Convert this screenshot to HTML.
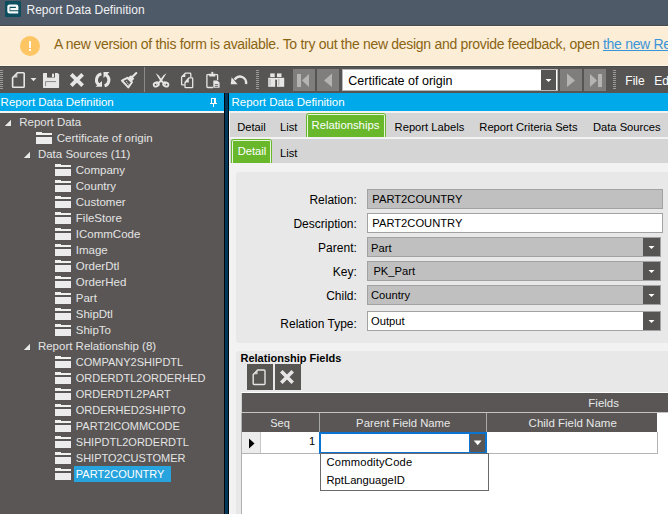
<!DOCTYPE html>
<html><head><meta charset="utf-8">
<style>
*{margin:0;padding:0;box-sizing:border-box}
html,body{width:668px;height:514px;overflow:hidden;background:#595655;font-family:"Liberation Sans",sans-serif;position:relative}
.a{position:absolute}
.t{position:absolute;white-space:nowrap;line-height:1}
</style></head><body>
<div class="a" style="left:0px;top:0px;width:668px;height:25px;background:#4f5a68;"></div>
<div class="a" style="left:0px;top:25px;width:668px;height:1px;background:#48494c;"></div>
<div class="a" style="left:5px;top:1px;width:16px;height:16px;background:#0d4e5e;border-radius:1px"></div>
<svg class="a" style="left:5px;top:1px" width="16" height="16" viewBox="0 0 16 16"><path d="M2.3 5.6 Q2.3 3.4 4.5 3.4 H11.2 Q13.4 3.4 13.4 5.6 V9.2 H5.3 V7 H10.9 V5.7 H4.6 V10.2 H13.2 V12.5 H4.5 Q2.3 12.5 2.3 10.3 Z" fill="#f6f9fa"/></svg>
<div class="t" style="left:26.5px;top:3.84px;font-size:12px;color:#f0f1f3;">Report Data Definition</div>
<div class="a" style="left:0px;top:26px;width:668px;height:40px;background:#fcedd6;"></div>
<div class="a" style="left:0px;top:26px;width:668px;height:1px;background:#fff7e2;"></div>
<div class="a" style="left:0px;top:65px;width:668px;height:1px;background:#fff7e2;"></div>
<div class="a" style="left:0px;top:66px;width:668px;height:1px;background:#49484a;"></div>
<div class="a" style="left:20px;top:36px;width:20px;height:20px;background:#fdc564;border-radius:50%"></div>
<div class="a" style="left:29.2px;top:41px;width:1.7px;height:6.5px;background:#fffaf0;"></div>
<div class="a" style="left:29.2px;top:49.2px;width:1.7px;height:1.7px;background:#fffaf0;"></div>
<div class="t" style="left:54px;top:37.15px;font-size:14px;color:#8a6412;letter-spacing:-0.3px;">A new version of this form is available. To try out the new design and provide feedback, open <span style="color:#3a95d8;text-decoration:underline">the new Report Data Definition</span></div>
<div class="a" style="left:0px;top:67px;width:668px;height:26px;background:#575554;"></div>
<svg class="a" style="left:0;top:66px" width="668" height="27" viewBox="0 66 668 27">
<g fill="#9c9a98"><rect x="0" y="70" width="3" height="1"/><rect x="0" y="72" width="3" height="1"/><rect x="0" y="74" width="3" height="1"/><rect x="0" y="76" width="3" height="1"/><rect x="0" y="78" width="3" height="1"/><rect x="0" y="80" width="3" height="1"/><rect x="0" y="82" width="3" height="1"/><rect x="0" y="84" width="3" height="1"/><rect x="0" y="86" width="3" height="1"/><rect x="0" y="88" width="3" height="1"/></g>
<path d="M12.6 77.8 L17.4 72.8 H23.4 Q24.2 72.8 24.2 73.6 V86.4 Q24.2 87.2 23.4 87.2 H13.4 Q12.6 87.2 12.6 86.4 Z" fill="none" stroke="#e6e6e6" stroke-width="1.6" stroke-linejoin="round"/><path d="M13 77.6 H17.4 V73.2 Z" fill="#e6e6e6" opacity="0.8"/>
<path d="M30.5 78 H36.5 L33.5 81.2 Z" fill="#e6e6e6"/>
<path d="M43.6 72.9 H57.6 L59.1 74.4 V87.3 Q59.1 87.9 58.5 87.9 H43.6 Q43 87.9 43 87.3 V73.5 Q43 72.9 43.6 72.9 Z" fill="#e6e6e6"/>
<rect x="47" y="72.9" width="8" height="4.7" fill="#575554"/>
<rect x="52" y="73.7" width="2" height="3.5" fill="#e6e6e6"/>
<path d="M45.6 86.2 V81.6 H56" fill="none" stroke="#8a8988" stroke-width="1"/>
<path d="M71.2 74.3 L82.6 85.7 M82.6 74.3 L71.2 85.7" stroke="#e6e6e6" stroke-width="3.8"/>
<path d="M101.4 73.9 A6.2 6.2 0 0 0 99.2 85.1" fill="none" stroke="#e6e6e6" stroke-width="3"/>
<path d="M95.5 86.8 L102 86.8 L102 81 Z" fill="#e6e6e6"/>
<path d="M104.6 85.9 A6.2 6.2 0 0 0 105.9 74.7" fill="none" stroke="#e6e6e6" stroke-width="3"/>
<path d="M103.5 72 L109.5 72 L103.5 78 Z" fill="#e6e6e6"/>
<path d="M136.3 73 L132 77.3" stroke="#e6e6e6" stroke-width="2" stroke-linecap="round"/>
<path d="M128 77.6 L131 75.2 L134.3 78.8 L131.6 81.4 Z" fill="#e6e6e6"/>
<path d="M121.9 80.6 L127.3 77.8 L132 82.2 L128.3 87.4 Z" fill="none" stroke="#e6e6e6" stroke-width="1.9" stroke-linejoin="round"/>
<path d="M123.5 82 L125 83.2 M125 84 L126.5 85.2 M126 81.3 L127.2 82.3 M127.4 83.3 L128.6 84.3" stroke="#e6e6e6" stroke-width="1"/>
<rect x="144" y="67" width="1" height="25" fill="#8c8a88"/>
<path d="M155.6 73.3 L158.6 75.2 L163.2 81.5 L166.5 83.5 L165.5 85 L161 82 Z" fill="#e6e6e6"/>
<path d="M166.5 73.3 L163.5 75.2 L158.9 81.5 L155.6 83.5 L156.6 85 L161.1 82 Z" fill="#e6e6e6"/>
<ellipse cx="156.3" cy="84.4" rx="2.7" ry="1.9" transform="rotate(-25 156.3 84.4)" fill="none" stroke="#e6e6e6" stroke-width="1.8"/>
<ellipse cx="165.8" cy="84.4" rx="2.7" ry="1.9" transform="rotate(25 165.8 84.4)" fill="none" stroke="#e6e6e6" stroke-width="1.8"/>
<path d="M181.6 77 L185.3 73.1 H190 Q190.8 73.1 190.8 73.9 V77.3 M181.6 77 V84.2 Q181.6 84.9 182.3 84.9 H184.5" fill="none" stroke="#e6e6e6" stroke-width="1.3" stroke-linejoin="round"/>
<path d="M181.8 77 H185.3 V73.3 Z" fill="#e6e6e6"/>
<path d="M185 82.5 L188.8 77.8 H192 Q192.7 77.8 192.7 78.5 V86.9 Q192.7 87.6 192 87.6 H185.7 Q185 87.6 185 86.9 Z" fill="none" stroke="#e6e6e6" stroke-width="1.3" stroke-linejoin="round"/>
<path d="M185.2 82.5 H188.8 V78 Z" fill="#e6e6e6"/>
<path d="M209 74.6 H207.6 Q206.9 74.6 206.9 75.3 V86.8 Q206.9 87.5 207.6 87.5 H213 M217.6 80 V75.3 Q217.6 74.6 216.9 74.6 H215.5" fill="none" stroke="#e6e6e6" stroke-width="1.3"/>
<path d="M208.8 73.8 H215.8 L215.2 76.6 H209.4 Z" fill="#e6e6e6"/>
<circle cx="212.3" cy="72.9" r="1.1" fill="#e6e6e6"/>
<path d="M213.3 80.6 H217.4 L219.6 82.8 V87.8 H213.3 Z" fill="#e6e6e6"/>
<path d="M214.8 84.6 H218.2 M214.8 86.4 H218.2" stroke="#575554" stroke-width="0.8"/>
<path d="M246 84 A6.2 6.2 0 0 0 234.6 79.6" fill="none" stroke="#e6e6e6" stroke-width="2.4"/>
<path d="M230.7 84.2 L231.6 77.3 L237.6 84.2 Z" fill="#e6e6e6"/>
<g fill="#9c9a98"><rect x="256" y="70" width="3" height="1"/><rect x="256" y="72" width="3" height="1"/><rect x="256" y="74" width="3" height="1"/><rect x="256" y="76" width="3" height="1"/><rect x="256" y="78" width="3" height="1"/><rect x="256" y="80" width="3" height="1"/><rect x="256" y="82" width="3" height="1"/><rect x="256" y="84" width="3" height="1"/><rect x="256" y="86" width="3" height="1"/><rect x="256" y="88" width="3" height="1"/></g>
<rect x="270.2" y="73.4" width="4.5" height="3.6" fill="#e6e6e6"/>
<rect x="277" y="73.4" width="4.5" height="3.6" fill="#e6e6e6"/>
<rect x="268.2" y="77.8" width="7" height="9" fill="#e6e6e6"/>
<rect x="277" y="77.8" width="7.2" height="9" fill="#e6e6e6"/>
<rect x="275.2" y="78" width="1.8" height="1.6" fill="#fff"/>
<path d="M270 79 V85.5 M278.8 79 V85.5" stroke="#a9a9a9" stroke-width="0.9"/>
<rect x="293" y="69" width="22" height="22" fill="#807e7c"/>
<rect x="317" y="69" width="22" height="22" fill="#807e7c"/>
<rect x="297" y="74" width="4" height="13" fill="#b6b4b2"/>
<path d="M309 74 V87 L302 80.5 Z" fill="#b6b4b2"/>
<path d="M332 73.5 V87 L324 80.5 Z" fill="#b6b4b2"/>
<rect x="560" y="69" width="22" height="22" fill="#807e7c"/>
<rect x="584" y="69" width="22" height="22" fill="#807e7c"/>
<path d="M567 73.5 V87 L575 80.5 Z" fill="#b6b4b2"/>
<path d="M590 74 V87 L597 80.5 Z" fill="#b6b4b2"/>
<rect x="598" y="74" width="4" height="13" fill="#b6b4b2"/>
<g fill="#9c9a98"><rect x="613" y="70" width="3" height="1"/><rect x="613" y="72" width="3" height="1"/><rect x="613" y="74" width="3" height="1"/><rect x="613" y="76" width="3" height="1"/><rect x="613" y="78" width="3" height="1"/><rect x="613" y="80" width="3" height="1"/><rect x="613" y="82" width="3" height="1"/><rect x="613" y="84" width="3" height="1"/><rect x="613" y="86" width="3" height="1"/><rect x="613" y="88" width="3" height="1"/></g>
</svg>
<div class="a" style="left:342px;top:69px;width:216px;height:22px;background:#fff;border:1px solid #b8b8b8"></div>
<div class="a" style="left:541px;top:70px;width:15px;height:20px;background:#575554;"></div>
<svg class="a" style="left:541px;top:70px" width="15" height="20"><path d="M4.5 9 H10.5 L7.5 12 Z" fill="#fff"/></svg>
<div class="t" style="left:348.3px;top:75.42px;font-size:12.5px;color:#000;">Certificate of origin</div>
<div class="t" style="left:625.3px;top:75.44px;font-size:12px;color:#fff;">File</div>
<div class="t" style="left:654.3px;top:75.44px;font-size:12px;color:#fff;">Edit</div>
<div class="a" style="left:0px;top:93px;width:224px;height:18px;background:#00aaea;"></div>
<div class="t" style="left:0.6px;top:97.27px;font-size:11.5px;color:#fff;">Report Data Definition</div>
<svg class="a" style="left:0;top:0" width="224" height="112"><g fill="#fff"><rect x="211" y="98" width="5" height="1"/><rect x="211" y="98" width="1" height="5"/><rect x="214" y="98" width="2" height="5"/><rect x="210" y="103" width="7" height="1"/><rect x="213" y="104" width="1" height="3"/></g></svg>
<div class="a" style="left:0px;top:111px;width:224px;height:2px;background:#f4f4f4;"></div>
<div class="a" style="left:0px;top:113px;width:224px;height:401px;background:#595655;"></div>
<div class="t" style="left:19.2px;top:117.27px;font-size:11.5px;color:#e4e4e4;">Report Data</div>
<div class="t" style="left:56.8px;top:133.27px;font-size:11.5px;color:#e4e4e4;">Certificate of origin</div>
<div class="t" style="left:37.9px;top:149.27px;font-size:11.5px;color:#e4e4e4;">Data Sources (11)</div>
<div class="t" style="left:75.8px;top:165.27px;font-size:11.5px;color:#e4e4e4;">Company</div>
<div class="t" style="left:75.8px;top:181.27px;font-size:11.5px;color:#e4e4e4;">Country</div>
<div class="t" style="left:75.8px;top:197.27px;font-size:11.5px;color:#e4e4e4;">Customer</div>
<div class="t" style="left:75.8px;top:213.27px;font-size:11.5px;color:#e4e4e4;">FileStore</div>
<div class="t" style="left:75.8px;top:229.27px;font-size:11.5px;color:#e4e4e4;">ICommCode</div>
<div class="t" style="left:75.8px;top:245.27px;font-size:11.5px;color:#e4e4e4;">Image</div>
<div class="t" style="left:75.8px;top:261.27px;font-size:11.5px;color:#e4e4e4;">OrderDtl</div>
<div class="t" style="left:75.8px;top:277.27px;font-size:11.5px;color:#e4e4e4;">OrderHed</div>
<div class="t" style="left:75.8px;top:293.27px;font-size:11.5px;color:#e4e4e4;">Part</div>
<div class="t" style="left:75.8px;top:309.27px;font-size:11.5px;color:#e4e4e4;">ShipDtl</div>
<div class="t" style="left:75.8px;top:325.27px;font-size:11.5px;color:#e4e4e4;">ShipTo</div>
<div class="t" style="left:37.9px;top:341.27px;font-size:11.5px;color:#e4e4e4;">Report Relationship (8)</div>
<div class="t" style="left:75.8px;top:356.69px;font-size:11px;color:#e4e4e4;">COMPANY2SHIPDTL</div>
<div class="t" style="left:75.8px;top:372.69px;font-size:11px;color:#e4e4e4;">ORDERDTL2ORDERHED</div>
<div class="t" style="left:75.8px;top:388.69px;font-size:11px;color:#e4e4e4;">ORDERDTL2PART</div>
<div class="t" style="left:75.8px;top:404.69px;font-size:11px;color:#e4e4e4;">ORDERHED2SHIPTO</div>
<div class="t" style="left:75.8px;top:420.69px;font-size:11px;color:#e4e4e4;">PART2ICOMMCODE</div>
<div class="t" style="left:75.8px;top:436.69px;font-size:11px;color:#e4e4e4;">SHIPDTL2ORDERDTL</div>
<div class="t" style="left:75.8px;top:452.69px;font-size:11px;color:#e4e4e4;">SHIPTO2CUSTOMER</div>
<div class="a" style="left:73.7px;top:466px;width:97px;height:16px;background:#27a3dd;"></div>
<div class="t" style="left:75.8px;top:468.69px;font-size:11px;color:#ffffff;">PART2COUNTRY</div>
<svg class="a" style="left:0;top:0" width="224" height="514"><rect x="10" y="120" width="1" height="1" fill="#e8e8e8"/><rect x="10" y="120" width="1" height="1" fill="#bdbdbd"/><rect x="9" y="121" width="2" height="1" fill="#e8e8e8"/><rect x="9" y="121" width="1" height="1" fill="#bdbdbd"/><rect x="8" y="122" width="3" height="1" fill="#e8e8e8"/><rect x="8" y="122" width="1" height="1" fill="#bdbdbd"/><rect x="7" y="123" width="4" height="1" fill="#e8e8e8"/><rect x="7" y="123" width="1" height="1" fill="#bdbdbd"/><rect x="6" y="124" width="5" height="1" fill="#e8e8e8"/><rect x="6" y="124" width="1" height="1" fill="#bdbdbd"/><rect x="5" y="125" width="6" height="1" fill="#e8e8e8"/><rect x="5" y="125" width="1" height="1" fill="#bdbdbd"/><rect x="36" y="132" width="6" height="1.5" fill="#f0f0f0"/><rect x="36" y="133" width="16" height="2" fill="#f0f0f0"/><rect x="36" y="137" width="16" height="7" fill="#ececec"/><rect x="29" y="152" width="1" height="1" fill="#e8e8e8"/><rect x="29" y="152" width="1" height="1" fill="#bdbdbd"/><rect x="28" y="153" width="2" height="1" fill="#e8e8e8"/><rect x="28" y="153" width="1" height="1" fill="#bdbdbd"/><rect x="27" y="154" width="3" height="1" fill="#e8e8e8"/><rect x="27" y="154" width="1" height="1" fill="#bdbdbd"/><rect x="26" y="155" width="4" height="1" fill="#e8e8e8"/><rect x="26" y="155" width="1" height="1" fill="#bdbdbd"/><rect x="25" y="156" width="5" height="1" fill="#e8e8e8"/><rect x="25" y="156" width="1" height="1" fill="#bdbdbd"/><rect x="24" y="157" width="6" height="1" fill="#e8e8e8"/><rect x="24" y="157" width="1" height="1" fill="#bdbdbd"/><rect x="55" y="164" width="6" height="1.5" fill="#f0f0f0"/><rect x="55" y="165" width="16" height="2" fill="#f0f0f0"/><rect x="55" y="169" width="16" height="7" fill="#ececec"/><rect x="55" y="180" width="6" height="1.5" fill="#f0f0f0"/><rect x="55" y="181" width="16" height="2" fill="#f0f0f0"/><rect x="55" y="185" width="16" height="7" fill="#ececec"/><rect x="55" y="196" width="6" height="1.5" fill="#f0f0f0"/><rect x="55" y="197" width="16" height="2" fill="#f0f0f0"/><rect x="55" y="201" width="16" height="7" fill="#ececec"/><rect x="55" y="212" width="6" height="1.5" fill="#f0f0f0"/><rect x="55" y="213" width="16" height="2" fill="#f0f0f0"/><rect x="55" y="217" width="16" height="7" fill="#ececec"/><rect x="55" y="228" width="6" height="1.5" fill="#f0f0f0"/><rect x="55" y="229" width="16" height="2" fill="#f0f0f0"/><rect x="55" y="233" width="16" height="7" fill="#ececec"/><rect x="55" y="244" width="6" height="1.5" fill="#f0f0f0"/><rect x="55" y="245" width="16" height="2" fill="#f0f0f0"/><rect x="55" y="249" width="16" height="7" fill="#ececec"/><rect x="55" y="260" width="6" height="1.5" fill="#f0f0f0"/><rect x="55" y="261" width="16" height="2" fill="#f0f0f0"/><rect x="55" y="265" width="16" height="7" fill="#ececec"/><rect x="55" y="276" width="6" height="1.5" fill="#f0f0f0"/><rect x="55" y="277" width="16" height="2" fill="#f0f0f0"/><rect x="55" y="281" width="16" height="7" fill="#ececec"/><rect x="55" y="292" width="6" height="1.5" fill="#f0f0f0"/><rect x="55" y="293" width="16" height="2" fill="#f0f0f0"/><rect x="55" y="297" width="16" height="7" fill="#ececec"/><rect x="55" y="308" width="6" height="1.5" fill="#f0f0f0"/><rect x="55" y="309" width="16" height="2" fill="#f0f0f0"/><rect x="55" y="313" width="16" height="7" fill="#ececec"/><rect x="55" y="324" width="6" height="1.5" fill="#f0f0f0"/><rect x="55" y="325" width="16" height="2" fill="#f0f0f0"/><rect x="55" y="329" width="16" height="7" fill="#ececec"/><rect x="29" y="344" width="1" height="1" fill="#e8e8e8"/><rect x="29" y="344" width="1" height="1" fill="#bdbdbd"/><rect x="28" y="345" width="2" height="1" fill="#e8e8e8"/><rect x="28" y="345" width="1" height="1" fill="#bdbdbd"/><rect x="27" y="346" width="3" height="1" fill="#e8e8e8"/><rect x="27" y="346" width="1" height="1" fill="#bdbdbd"/><rect x="26" y="347" width="4" height="1" fill="#e8e8e8"/><rect x="26" y="347" width="1" height="1" fill="#bdbdbd"/><rect x="25" y="348" width="5" height="1" fill="#e8e8e8"/><rect x="25" y="348" width="1" height="1" fill="#bdbdbd"/><rect x="24" y="349" width="6" height="1" fill="#e8e8e8"/><rect x="24" y="349" width="1" height="1" fill="#bdbdbd"/><rect x="55" y="356" width="6" height="1.5" fill="#f0f0f0"/><rect x="55" y="357" width="16" height="2" fill="#f0f0f0"/><rect x="55" y="361" width="16" height="7" fill="#ececec"/><rect x="55" y="372" width="6" height="1.5" fill="#f0f0f0"/><rect x="55" y="373" width="16" height="2" fill="#f0f0f0"/><rect x="55" y="377" width="16" height="7" fill="#ececec"/><rect x="55" y="388" width="6" height="1.5" fill="#f0f0f0"/><rect x="55" y="389" width="16" height="2" fill="#f0f0f0"/><rect x="55" y="393" width="16" height="7" fill="#ececec"/><rect x="55" y="404" width="6" height="1.5" fill="#f0f0f0"/><rect x="55" y="405" width="16" height="2" fill="#f0f0f0"/><rect x="55" y="409" width="16" height="7" fill="#ececec"/><rect x="55" y="420" width="6" height="1.5" fill="#f0f0f0"/><rect x="55" y="421" width="16" height="2" fill="#f0f0f0"/><rect x="55" y="425" width="16" height="7" fill="#ececec"/><rect x="55" y="436" width="6" height="1.5" fill="#f0f0f0"/><rect x="55" y="437" width="16" height="2" fill="#f0f0f0"/><rect x="55" y="441" width="16" height="7" fill="#ececec"/><rect x="55" y="452" width="6" height="1.5" fill="#f0f0f0"/><rect x="55" y="453" width="16" height="2" fill="#f0f0f0"/><rect x="55" y="457" width="16" height="7" fill="#ececec"/><rect x="55" y="468" width="6" height="1.5" fill="#f0f0f0"/><rect x="55" y="469" width="16" height="2" fill="#f0f0f0"/><rect x="55" y="473" width="16" height="7" fill="#ececec"/></svg>
<div class="a" style="left:224px;top:93px;width:5px;height:421px;background:#04385a;border-left:1px solid #02080e;border-right:1px solid #000810"></div>
<div class="a" style="left:229px;top:93px;width:439px;height:18px;background:#00aaea;"></div>
<div class="t" style="left:231.5px;top:97.27px;font-size:11.5px;color:#fff;">Report Data Definition</div>
<div class="a" style="left:229px;top:111px;width:439px;height:403px;background:#f2f2f2;"></div>
<div class="a" style="left:229px;top:113px;width:439px;height:24px;background:#d5d5d5;"></div>
<div class="a" style="left:229px;top:139px;width:439px;height:24px;background:#d5d5d5;"></div>
<div class="a" style="left:229px;top:111px;width:1px;height:403px;background:#f6f6f6;"></div>
<div class="a" style="left:306px;top:113px;width:80px;height:24px;background:#69b82b;border-radius:3px 3px 0 0"></div>
<div class="a" style="left:307px;top:114px;width:78px;height:23px;background:#69b82b;border:1px solid #e8f5dd;border-bottom:none;border-radius:2px 2px 0 0"></div>
<div class="t" style="left:311.5px;top:120.33px;font-size:11.3px;color:#ffffff;">Relationships</div>
<div class="t" style="left:237.2px;top:122.32px;font-size:11.2px;color:#000;">Detail</div>
<div class="t" style="left:280px;top:122.32px;font-size:11.2px;color:#000;">List</div>
<div class="t" style="left:394.6px;top:122.32px;font-size:11.2px;color:#000;">Report Labels</div>
<div class="t" style="left:479.3px;top:122.32px;font-size:11.2px;color:#000;">Report Criteria Sets</div>
<div class="t" style="left:592.9px;top:122.32px;font-size:11.2px;color:#000;">Data Sources</div>
<div class="a" style="left:231px;top:139px;width:41px;height:24px;background:#69b82b;border-radius:3px 3px 0 0"></div>
<div class="a" style="left:232px;top:140px;width:39px;height:23px;background:#69b82b;border:1px solid #e8f5dd;border-bottom:none;border-radius:2px 2px 0 0"></div>
<div class="t" style="left:237.7px;top:146.12px;font-size:11.2px;color:#ffffff;">Detail</div>
<div class="t" style="left:280px;top:148.22px;font-size:11.2px;color:#000;">List</div>
<div class="a" style="left:236px;top:172px;width:440px;height:171px;background:#e8e8e8;border-radius:3px"></div>
<div class="t" style="right:311.2px;top:194.14px;font-size:12px;color:#000;">Relation:</div>
<div class="t" style="right:311.2px;top:217.54px;font-size:12px;color:#000;">Description:</div>
<div class="t" style="right:311.2px;top:241.84px;font-size:12px;color:#000;">Parent:</div>
<div class="t" style="right:311.2px;top:266.44px;font-size:12px;color:#000;">Key:</div>
<div class="t" style="right:311.2px;top:290.44px;font-size:12px;color:#000;">Child:</div>
<div class="t" style="right:311.2px;top:318.34px;font-size:12px;color:#000;">Relation Type:</div>
<div class="a" style="left:367px;top:189px;width:296px;height:20px;background:#c0c0c0;border:1px solid #a2a2a2"></div>
<div class="t" style="left:372.3px;top:193.62px;font-size:11.2px;color:#000;">PART2COUNTRY</div>
<div class="a" style="left:367px;top:213px;width:296px;height:20px;background:#fff;border:1px solid #a2a2a2"></div>
<div class="t" style="left:372.3px;top:217.62px;font-size:11.2px;color:#000;">PART2COUNTRY</div>
<div class="a" style="left:367px;top:237px;width:294px;height:20px;background:#c0c0c0;border:1px solid #a2a2a2"></div>
<div class="a" style="left:643px;top:238px;width:17px;height:18px;background:#575554;"></div>
<svg class="a" style="left:643px;top:238px" width="17" height="18"><path d="M5.5 8 H11.5 L8.5 11 Z" fill="#fff"/></svg>
<div class="t" style="left:371px;top:242.52px;font-size:11.2px;color:#000;">Part</div>
<div class="a" style="left:367px;top:261px;width:294px;height:20px;background:#c0c0c0;border:1px solid #a2a2a2"></div>
<div class="a" style="left:643px;top:262px;width:17px;height:18px;background:#575554;"></div>
<svg class="a" style="left:643px;top:262px" width="17" height="18"><path d="M5.5 8 H11.5 L8.5 11 Z" fill="#fff"/></svg>
<div class="t" style="left:373.4px;top:265.92px;font-size:11.2px;color:#000;">PK_Part</div>
<div class="a" style="left:367px;top:285px;width:294px;height:20px;background:#c0c0c0;border:1px solid #a2a2a2"></div>
<div class="a" style="left:643px;top:286px;width:17px;height:18px;background:#575554;"></div>
<svg class="a" style="left:643px;top:286px" width="17" height="18"><path d="M5.5 8 H11.5 L8.5 11 Z" fill="#fff"/></svg>
<div class="t" style="left:371px;top:290.12px;font-size:11.2px;color:#000;">Country</div>
<div class="a" style="left:367px;top:311px;width:294px;height:20px;background:#fff;border:1px solid #a2a2a2"></div>
<div class="a" style="left:643px;top:312px;width:17px;height:18px;background:#575554;"></div>
<svg class="a" style="left:643px;top:312px" width="17" height="18"><path d="M5.5 8 H11.5 L8.5 11 Z" fill="#fff"/></svg>
<div class="t" style="left:371px;top:316.42px;font-size:11.2px;color:#000;">Output</div>
<div class="a" style="left:236px;top:351px;width:440px;height:170px;background:#e8e8e8;border-radius:3px"></div>
<div class="t" style="left:240.5px;top:353.29px;font-size:11px;color:#000;font-weight:bold;">Relationship Fields</div>
<div class="a" style="left:247px;top:364px;width:26px;height:26px;background:#585653;"></div>
<div class="a" style="left:275px;top:364px;width:26px;height:26px;background:#585653;"></div>
<svg class="a" style="left:247px;top:364px" width="54" height="26"><path d="M6.2 10.5 L10.6 6 H17 Q18 6 18 7 V19.5 Q18 20.5 17 20.5 H7.2 Q6.2 20.5 6.2 19.5 Z" fill="none" stroke="#e6e6e6" stroke-width="1.4" stroke-linejoin="round"/><path d="M6.6 10.3 H10.6 V6.3 Z" fill="#e6e6e6" opacity="0.8"/><path d="M34.3 7.3 L45.7 18.7 M45.7 7.3 L34.3 18.7" stroke="#e6e6e6" stroke-width="3.6"/></svg>
<div class="a" style="left:241px;top:392px;width:427px;height:122px;background:#fff;"></div>
<div class="a" style="left:242px;top:393px;width:426px;height:19px;background:#595655;"></div>
<div class="a" style="left:242px;top:412px;width:426px;height:1px;background:#c4c4c4;"></div>
<div class="t" style="left:588.3px;top:397.67px;font-size:11.5px;color:#e8e8e8;">Fields</div>
<div class="a" style="left:242px;top:413px;width:415px;height:19px;background:#595655;"></div>
<div class="a" style="left:319px;top:413px;width:1px;height:19px;background:#a8a8a8;"></div>
<div class="a" style="left:486px;top:413px;width:1px;height:19px;background:#a8a8a8;"></div>
<div class="t" style="left:80px;width:400px;text-align:center;top:417.69px;font-size:11px;color:#e8e8e8;">Seq</div>
<div class="t" style="left:203.2px;width:400px;text-align:center;top:418.43px;font-size:11.3px;color:#e8e8e8;">Parent Field Name</div>
<div class="t" style="left:372.70000000000005px;width:400px;text-align:center;top:418.27px;font-size:11.5px;color:#e8e8e8;">Child Field Name</div>
<div class="a" style="left:242px;top:432px;width:19px;height:21px;background:#ececec;border-right:1px solid #c8c8c8"></div>
<svg class="a" style="left:241px;top:432px" width="20" height="21"><path d="M8 6.5 V16.5 L13.5 11.5 Z" fill="#000"/></svg>
<div class="a" style="left:241px;top:452.5px;width:417px;height:1px;background:#b4b4b4;"></div>
<div class="t" style="right:353px;top:436.19px;font-size:11px;color:#000;">1</div>
<div class="a" style="left:319px;top:432px;width:168px;height:21.5px;background:#fff;border:2px solid #0b74d0"></div>
<div class="a" style="left:469px;top:432px;width:18px;height:21px;background:#0b74d0;"></div>
<div class="a" style="left:470.4px;top:433.9px;width:14.6px;height:17.7px;background:#595655;"></div>
<svg class="a" style="left:469px;top:432px" width="18" height="21"><path d="M4.8 8.6 H12.6 L8.7 13.2 Z" fill="#fff"/></svg>
<div class="a" style="left:657px;top:432px;width:1px;height:21px;background:#b4b4b4;"></div>
<div class="a" style="left:241px;top:413px;width:1px;height:101px;background:#b0b0b0;"></div>
<div class="a" style="left:241px;top:393px;width:1px;height:20px;background:#d0d0d0;"></div>
<div class="a" style="left:320px;top:453px;width:169px;height:38px;background:#fff;border:1px solid #6a6a6a"></div>
<div class="t" style="left:326.5px;top:457.12px;font-size:11.2px;color:#000;letter-spacing:0.2px;">CommodityCode</div>
<div class="t" style="left:326.5px;top:474.52px;font-size:11.2px;color:#000;">RptLanguageID</div>
</body></html>
